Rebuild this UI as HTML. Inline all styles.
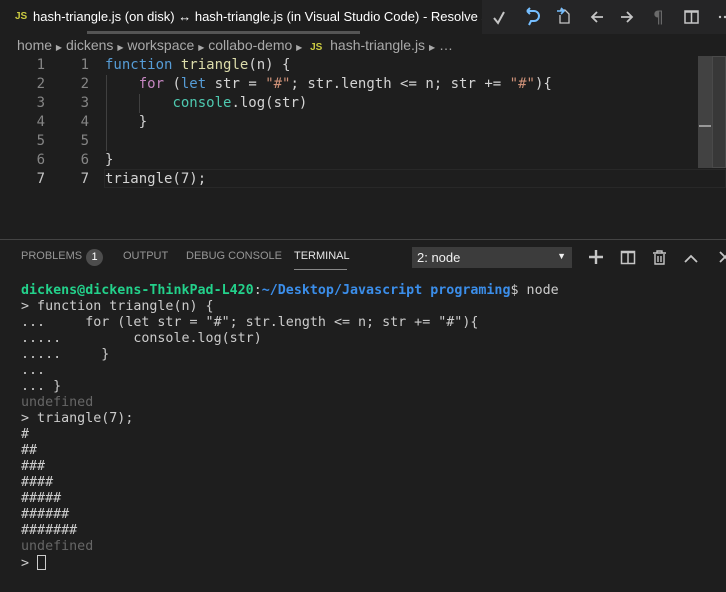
<!DOCTYPE html>
<html><head><meta charset="utf-8"><style>
*{margin:0;padding:0;box-sizing:border-box}
body{width:726px;height:592px;background:#1e1e1e;overflow:hidden;position:relative;font-family:"Liberation Sans","DejaVu Sans",sans-serif;color:#ccc}
.abs{position:absolute}
.tab{left:0;top:0;width:726px;height:35px;background:#1e1e1e;color:#fff;font-size:13px}
.tools{left:482px;top:0;width:244px;height:34px;background:#252526}
.code{font-family:"DejaVu Sans Mono",monospace;font-size:14px;line-height:19px;white-space:pre}
.term{font-family:"DejaVu Sans Mono",monospace;font-size:13.33px;line-height:16px;white-space:pre;color:#ccc}
.kw{color:#569cd6}.fn{color:#dcdcaa}.pu{color:#c586c0}.st{color:#ce9178}.va{color:#9cdcfe}.cl{color:#4ec9b0}
.ln{color:#858585;text-align:right;width:20px}
</style></head><body>
<div class="abs tab">
  <span class="abs" style="left:15px;top:11px;color:#cbcb41;font-size:10px;font-weight:bold">JS</span>
  <span class="abs" style="left:33px;top:9px;white-space:nowrap">hash-triangle.js (on disk) ↔ hash-triangle.js (in Visual Studio Code) - Resolve s</span>
  <div class="abs" style="left:87px;top:31px;width:273px;height:3px;background:#555"></div>
</div>
<div class="abs tools">
  <svg width="244" height="34" viewBox="482 0 244 34">
    <path d="M494 18l4 5 6-11" stroke="#c5c5c5" stroke-width="2" fill="none"/>
    <path d="M527 11h7a5 5 0 010 10h-3l-2 4M527 11l3-3M527 11l3 3" stroke="#75beff" stroke-width="2" fill="none"/>
    <path d="M560 10h5l4 4v9h-9v-8" stroke="#c5c5c5" stroke-width="1.3" fill="none"/><path d="M557 11h7M561 8l3 3-3 3" stroke="#75beff" stroke-width="1.6" fill="none"/>
    <path d="M603 17h-11M597 12l-5 5 5 5" stroke="#c5c5c5" stroke-width="1.8" fill="none"/>
    <path d="M621 17h11M627 12l5 5-5 5" stroke="#c5c5c5" stroke-width="1.8" fill="none"/>
    <text x="653" y="23" fill="#6a6a6a" font-size="17" font-family="DejaVu Sans">¶</text>
    <rect x="685" y="11" width="13" height="12" stroke="#c5c5c5" stroke-width="1.5" fill="none"/><path d="M691.5 11v12M685 12h13" stroke="#c5c5c5" stroke-width="1.5"/>
    <circle cx="720" cy="17" r="1.2" fill="#c5c5c5"/><circle cx="725" cy="17" r="1.2" fill="#c5c5c5"/>
  </svg>
</div>
<div class="abs" style="left:17px;top:37px;font-size:14px;color:#a9a9a9;white-space:nowrap">home <span style="font-size:8px">▶</span> dickens <span style="font-size:8px">▶</span> workspace <span style="font-size:8px">▶</span> collabo-demo <span style="font-size:8px">▶</span> &nbsp;<b style="color:#cbcb41;font-size:10px">JS</b> &nbsp;hash-triangle.js <span style="font-size:8px">▶</span> …</div>
<div class="abs" style="left:104px;top:169px;width:622px;height:19px;border:1px solid #282828"></div>
<div class="abs" style="left:106px;top:75px;width:1px;height:76px;background:#404040"></div>
<div class="abs" style="left:139px;top:94px;width:1px;height:19px;background:#404040"></div>
<div class="abs code ln" style="left:25px;top:56px">1
2
3
4
5
6
<span style="color:#c6c6c6">7</span></div>
<div class="abs code ln" style="left:69px;top:56px">1
2
3
4
5
6
<span style="color:#c6c6c6">7</span></div>
<div class="abs code" style="left:105px;top:56px;color:#d4d4d4"><span class="kw">function</span> <span class="fn">triangle</span>(n) {
    <span class="pu">for</span> (<span class="kw">let</span> str = <span class="st">"#"</span>; str.length &lt;= n; str += <span class="st">"#"</span>){
        <span class="cl">console</span>.log(str)
    }

}
triangle(7);</div>
<div class="abs" style="left:698px;top:56px;width:14px;height:112px;background:#424242"></div>
<div class="abs" style="left:712px;top:56px;width:14px;height:112px;background:#383838;border:1px solid #4a4a4a"></div>
<div class="abs" style="left:699px;top:125px;width:12px;height:2px;background:#999"></div>
<div class="abs" style="left:0;top:239px;width:726px;height:1px;background:#444"></div>
<div class="abs" style="left:0;top:240px;width:726px;height:352px;background:#1e1e1e"></div>
<div class="abs" style="left:21px;top:250px;font-size:11px;color:#969696;white-space:nowrap">PROBLEMS</div>
<div class="abs" style="left:86px;top:249px;width:17px;height:17px;border-radius:9px;background:#4d4d4d;color:#fff;font-size:11px;text-align:center;line-height:17px">1</div>
<div class="abs" style="left:123px;top:250px;font-size:11px;color:#969696">OUTPUT</div>
<div class="abs" style="left:186px;top:250px;font-size:11px;color:#969696;white-space:nowrap">DEBUG CONSOLE</div>
<div class="abs" style="left:294px;top:250px;font-size:11px;color:#e7e7e7">TERMINAL</div>
<div class="abs" style="left:294px;top:269px;width:53px;height:1px;background:#888"></div>
<div class="abs" style="left:412px;top:247px;width:160px;height:21px;background:#3c3c3c;color:#f0f0f0;font-size:13px;padding:3px 5px">2: node<span style="position:absolute;right:6px;top:4px;font-size:9px">▼</span></div>
<svg class="abs" style="left:580px;top:245px" width="146" height="24">
  <path d="M16 5v14M9 12h14" stroke="#c5c5c5" stroke-width="2.4"/>
  <rect x="41.5" y="6.5" width="13" height="12" stroke="#c5c5c5" stroke-width="1.5" fill="none"/><path d="M48 6v13M41 7.5h14" stroke="#c5c5c5" stroke-width="1.5"/>
  <path d="M73 8h13M77 8V6h5v2M75 9v10h9V9M78 11v6M81 11v6" stroke="#c5c5c5" stroke-width="1.4" fill="none"/>
  <path d="M105 17l6-6 6 6" stroke="#c5c5c5" stroke-width="1.8" fill="none"/>
  <path d="M140 7l10 10M150 7l-10 10" stroke="#c5c5c5" stroke-width="1.8"/>
</svg>
<div class="abs term" style="left:21px;top:283px"><span style="color:#23d18b;font-weight:bold">dickens@dickens-ThinkPad-L420</span>:<span style="color:#3b8eea;font-weight:bold">~/Desktop/Javascript programing</span>$ node
&gt; function triangle(n) {
...     for (let str = "#"; str.length &lt;= n; str += "#"){
.....         console.log(str)
.....     }
...
... }
<span style="color:#666">undefined</span>
&gt; triangle(7);
#
##
###
####
#####
######
#######
<span style="color:#666">undefined</span>
&gt; <span style="display:inline-block;width:9px;height:15px;border:1px solid #ccc;vertical-align:-3px"></span></div>
</body></html>
